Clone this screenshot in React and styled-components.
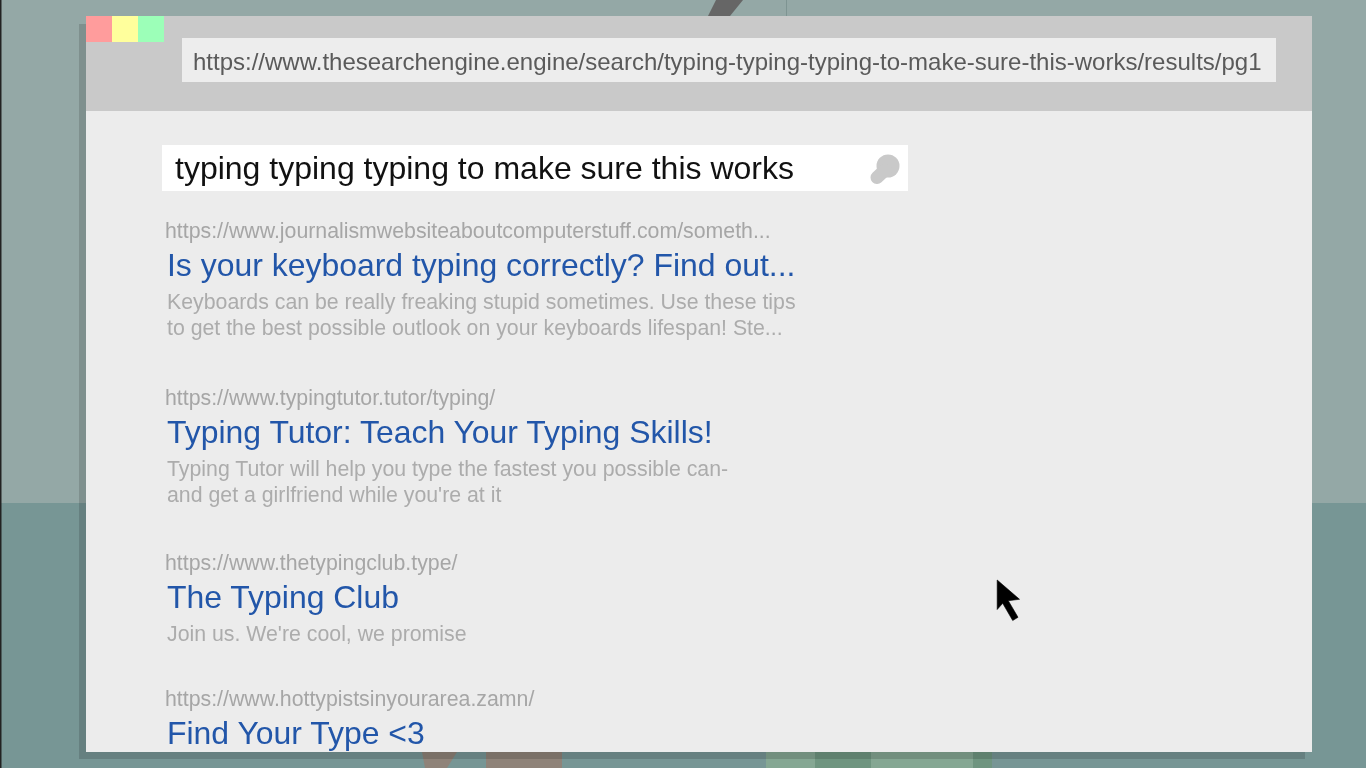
import React from 'react';
import styled, { createGlobalStyle } from 'styled-components';

const Global = createGlobalStyle`
  html, body { margin: 0; padding: 0; height: 100%; overflow: hidden; background: #94a8a6; }
  #root { height: 100%; }
`;

const Scene = styled.div`
  position: relative;
  width: 1366px;
  height: 768px;
  overflow: hidden;
  box-sizing: border-box;
  padding: 16px 54px 16px 86px;
  display: flex;
  font-family: "Liberation Sans", Arial, sans-serif;
  background: linear-gradient(to bottom, #94a8a6 0, #94a8a6 503px, #779695 503px, #779695 100%);
  filter: blur(0.45px);
`;

const Backdrop = styled.svg`
  position: absolute;
  inset: 0;
`;

const BrowserWindow = styled.main`
  position: relative;
  flex: 1;
  display: flex;
  flex-direction: column;
  overflow: hidden;
  background: #ececec;
`;

const WindowShadow = styled.div`
  position: absolute;
  left: 79px;
  top: 24px;
  width: 1226px;
  height: 735px;
  background: rgba(0, 0, 0, 0.14);
`;

const TitleBar = styled.header`
  position: relative;
  flex: none;
  height: 95px;
  box-sizing: border-box;
  padding: 22px 36px 0 96px;
  background: #c9c9c9;
`;

const Lights = styled.div`
  position: absolute;
  left: 0;
  top: 0;
  display: flex;
`;

const Light = styled.span`
  width: 26px;
  height: 26px;
  background: ${p => p.$color};
`;

const AddressBar = styled.div`
  height: 44px;
  line-height: 47px;
  padding-left: 11px;
  background: #ededed;
  color: #5a5a5a;
  font-size: 24px;
  white-space: nowrap;
`;

const Content = styled.div`
  flex: 1;
  padding: 34px 0 0 76px;
`;

const SearchBox = styled.div`
  width: 746px;
  height: 46px;
  box-sizing: border-box;
  display: flex;
  align-items: center;
  justify-content: space-between;
  padding: 0 7px 0 13px;
  background: #fff;
  color: #111;
  font-size: 32px;
  white-space: nowrap;
`;

const Results = styled.div`
  margin-top: 27px;
  padding-left: 3px;
`;

const Result = styled.article`
  margin-bottom: ${p => p.$after}px;
`;

const Url = styled.div`
  height: 26px;
  line-height: 26px;
  color: #a6a6a6;
  font-size: 21.3px;
  white-space: nowrap;
`;

const Title = styled.div`
  height: 40px;
  line-height: 42px;
  margin-left: 2px;
  color: #2256a9;
  font-size: 31.95px;
  white-space: nowrap;
`;

const Snippet = styled.p`
  margin: 5px 0 0 2px;
  line-height: 26px;
  color: #acacac;
  font-size: 21.3px;
  white-space: nowrap;
`;

const Cursor = styled.svg`
  position: absolute;
  left: 990px;
  top: 572px;
`;

const results = [
  { url: 'https://www.journalismwebsiteaboutcomputerstuff.com/someth...', title: 'Is your keyboard typing correctly? Find out...', lines: ['Keyboards can be really freaking stupid sometimes. Use these tips', "to get the best possible outlook on your keyboards lifespan! Ste..."], after: 44 },
  { url: 'https://www.typingtutor.tutor/typing/', title: 'Typing Tutor: Teach Your Typing Skills!', lines: ['Typing Tutor will help you type the fastest you possible can-', "and get a girlfriend while you're at it"], after: 42 },
  { url: 'https://www.thetypingclub.type/', title: 'The Typing Club', lines: ["Join us. We're cool, we promise"], after: 39 },
  { url: 'https://www.hottypistsinyourarea.zamn/', title: 'Find Your Type <3', lines: [], after: 0 },
];

export default function App() {
  return (
    <>
      <Global />
      <Scene>
        <Backdrop width="1366" height="768" viewBox="0 0 1366 768">
          <polygon points="716,0 743,0 730,16 708,16" fill="#666" />
          <rect x="786" y="0" width="1" height="16" fill="#7e9492" />
          <rect x="0" y="0" width="1.5" height="768" fill="#222" />
          <polygon points="422,752 457,752 447,768 425,768" fill="#8f8379" />
          <rect x="486" y="752" width="76" height="16" fill="#8f8379" />
          <rect x="766" y="752" width="49" height="16" fill="#85a793" />
          <rect x="815" y="752" width="56" height="16" fill="#6f9580" />
          <rect x="871" y="752" width="102" height="16" fill="#85a793" />
          <rect x="973" y="752" width="19" height="16" fill="#6f9580" />
        </Backdrop>
        <WindowShadow />
        <BrowserWindow>
          <TitleBar>
            <Lights>
              <Light $color="#ff9c9c" />
              <Light $color="#ffff9c" />
              <Light $color="#9cffb8" />
            </Lights>
            <AddressBar>https://www.thesearchengine.engine/search/typing-typing-typing-to-make-sure-this-works/results/pg1</AddressBar>
          </TitleBar>
          <Content>
            <SearchBox>
              typing typing typing to make sure this works
              <svg width="32" height="32" viewBox="0 0 32 32">
                <circle cx="19" cy="14" r="11.5" fill="#c9c9c9" />
                <line x1="8" y1="25.5" x2="16" y2="18" stroke="#c9c9c9" strokeWidth="13" strokeLinecap="round" />
              </svg>
            </SearchBox>
            <Results>
              {results.map(r => (
                <Result key={r.url} $after={r.after}>
                  <Url>{r.url}</Url>
                  <Title>{r.title}</Title>
                  {r.lines.length > 0 && (
                    <Snippet>
                      {r.lines.map((l, i) => (
                        <React.Fragment key={l}>{i > 0 && <br />}{l}</React.Fragment>
                      ))}
                    </Snippet>
                  )}
                </Result>
              ))}
            </Results>
          </Content>
        </BrowserWindow>
        <Cursor width="40" height="60" viewBox="0 0 40 60">
          <polygon points="7.2,8 29.5,27.3 18.3,28.7 28,45.3 22.7,48.5 12.7,31.3 7.2,37.5" fill="#000" stroke="#000" strokeWidth="0.6" strokeLinejoin="round" />
        </Cursor>
      </Scene>
    </>
  );
}
